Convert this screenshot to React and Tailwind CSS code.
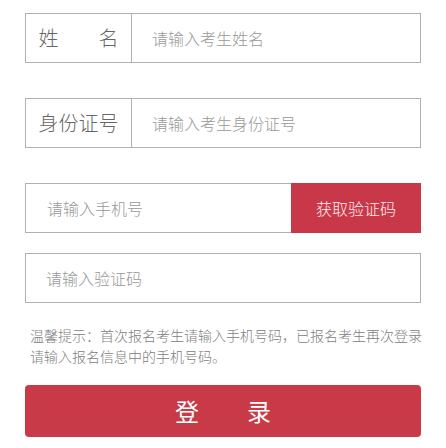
import { useState } from "react";

export default function App() {
    const [form, setForm] = useState({ name: "", idCard: "", phone: "", code: "" });

    const update = (key) => (e) => setForm({ ...form, [key]: e.target.value });

    return (
        <div
            className="w-[446px] h-[448px] bg-white px-[25px] pt-[13px]"
            style={{ fontFamily: '"Microsoft YaHei", "Noto Sans CJK SC", sans-serif' }}
        >
            {/* 姓名 */}
            <div className="flex h-[50px] border border-[#b0b0b0]">
                <div className="w-[106px] flex items-center justify-center border-r border-[#b0b0b0] text-[20px] font-light text-[#666]">
                    姓　　名
                </div>
                <input
                    className="flex-1 min-w-0 pl-[20px] text-[16px] font-light text-[#333] outline-none placeholder:text-[#999]"
                    placeholder="请输入考生姓名"
                    value={form.name}
                    onChange={update("name")}
                />
            </div>

            {/* 身份证号 */}
            <div className="flex h-[50px] border border-[#b0b0b0] mt-[35px]">
                <div className="w-[106px] flex items-center justify-center border-r border-[#b0b0b0] text-[20px] font-light text-[#666]">
                    身份证号
                </div>
                <input
                    className="flex-1 min-w-0 pl-[20px] text-[16px] font-light text-[#333] outline-none placeholder:text-[#999]"
                    placeholder="请输入考生身份证号"
                    value={form.idCard}
                    onChange={update("idCard")}
                />
            </div>

            {/* 手机号 + 验证码按钮 */}
            <div className="flex h-[50px] mt-[35px]">
                <input
                    className="flex-1 min-w-0 border border-r-0 border-[#b0b0b0] pl-[21px] text-[16px] font-light text-[#333] outline-none placeholder:text-[#999]"
                    placeholder="请输入手机号"
                    value={form.phone}
                    onChange={update("phone")}
                />
                <button className="w-[130px] h-full bg-[#c93848] text-[16px] font-light text-[#fdeef0]">
                    获取验证码
                </button>
            </div>

            {/* 验证码 */}
            <div className="flex h-[50px] border border-[#b0b0b0] mt-[20px]">
                <input
                    className="flex-1 min-w-0 pl-[20px] text-[16px] font-light text-[#333] outline-none placeholder:text-[#999]"
                    placeholder="请输入验证码"
                    value={form.code}
                    onChange={update("code")}
                />
            </div>

            <p className="mt-[22px] pl-[5px] text-[14px] leading-[21px] font-light text-[#808080] whitespace-nowrap">
                温馨提示：首次报名考生请输入手机号码，已报名考生再次登录
                <br />
                请输入报名信息中的手机号码。
            </p>

            <button className="mt-[18px] w-full h-[52px] rounded-[4px] bg-[#c83a48] text-[24px] text-white">
                登　　录
            </button>
        </div>
    );
}
